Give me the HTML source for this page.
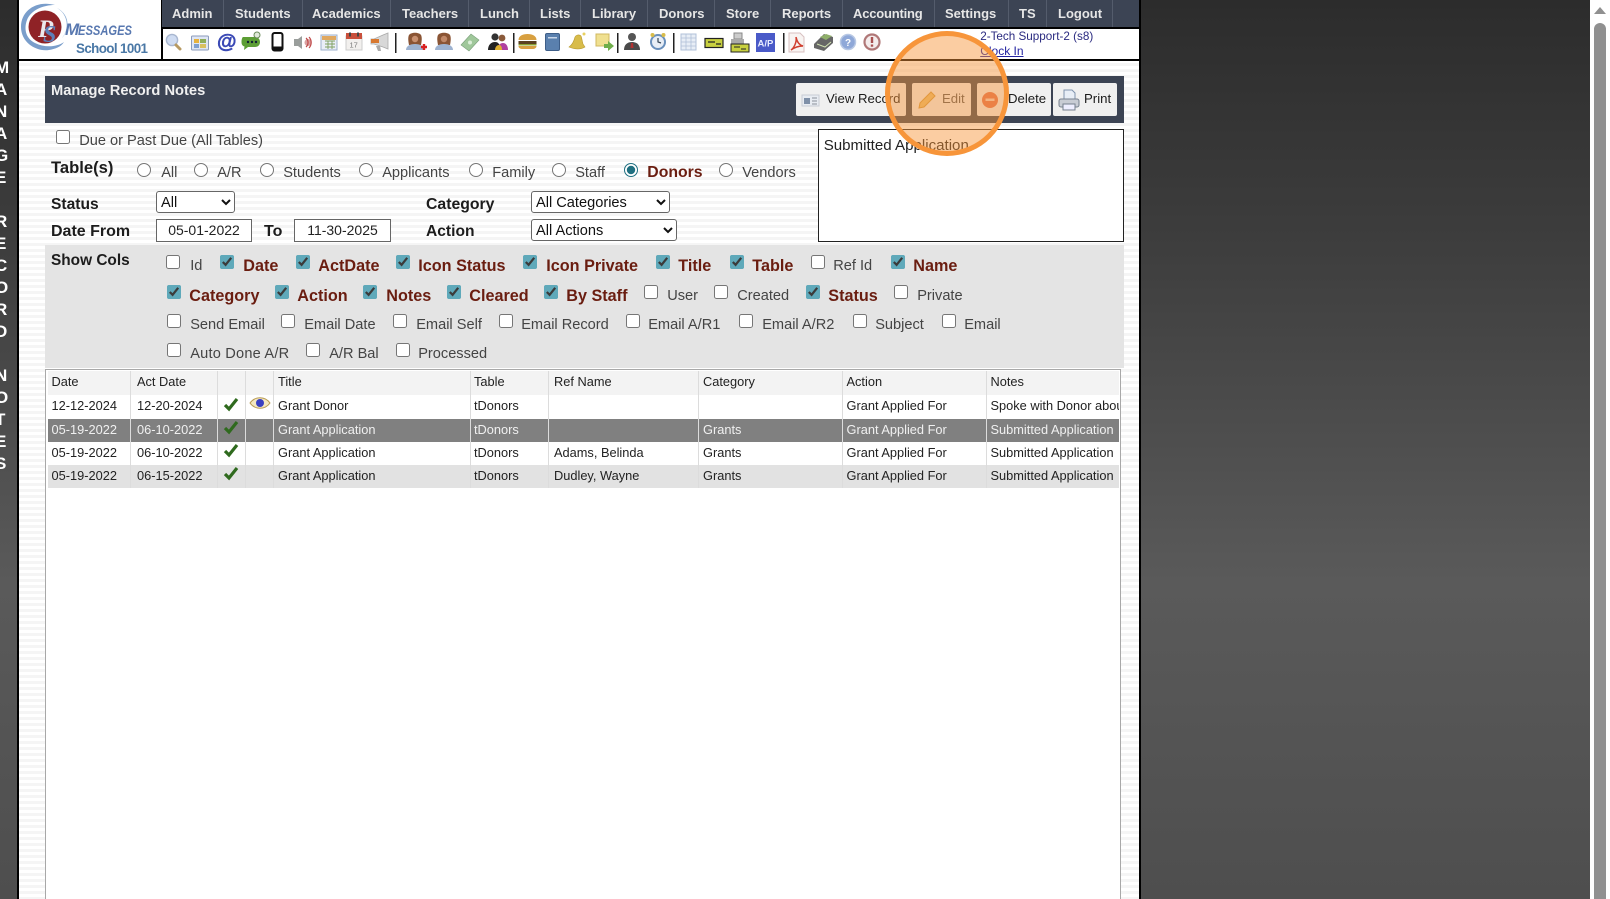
<!DOCTYPE html>
<html><head><meta charset="utf-8"><title>Manage Record Notes</title>
<style>
html,body{margin:0;padding:0;width:1610px;height:899px;overflow:hidden;background:#fff}
body{position:relative;font-family:"Liberation Sans",sans-serif;color:#333}
div,span,input,svg,select{position:absolute;box-sizing:border-box}
.bgd{left:0;top:0;width:1590px;height:899px;background:linear-gradient(#2c2c2c 0,#3c3c3c 25%,#5a5a5a 65%,#4e4e4e 100%)}
.side{left:-5px;top:57px;width:22px;height:842px;overflow:hidden;font:bold 17px/22px "Liberation Sans",sans-serif;color:#fff;text-align:left;white-space:pre}
.sidewrap{left:0;top:0;width:17px;height:899px;overflow:hidden}
.page{left:17px;top:0;width:1124px;height:899px;border-left:2px solid #000;border-right:2px solid #000;background:repeating-linear-gradient(#fff 0,#fff 3px,#f5f5f5 3px,#f5f5f5 6px)}
.nav{left:162px;top:0;width:977px;height:27px;background:#3c4454}
.nav span{top:0;height:27px;font:bold 13px/27px "Liberation Sans",sans-serif;color:#e6e6e6;white-space:nowrap}
.nav i{position:absolute;top:0;width:1px;height:27px;background:#545c6c}
.t{position:absolute;white-space:nowrap;font-size:14.6px;line-height:20px;color:#444;margin-left:.2px}
.b{position:absolute;white-space:nowrap;font-weight:bold;font-size:15.6px;line-height:20px;color:#1c1c1c}
.r{position:absolute;white-space:nowrap;font-weight:bold;font-size:16.2px;line-height:20px;color:#6a1d10;margin-left:.3px}
.row{left:0;width:1200px;height:20px}
input[type=checkbox],input[type=radio]{margin:0;width:14px;height:14px;accent-color:#5fa9ba}
.row input{top:-1px}
.sel{height:22px;font:14.6px "Liberation Sans",sans-serif;background:#fff;color:#111;border:1px solid #666;border-radius:3px;padding:1px 0 0}
.dt{height:23px;border:1px solid #666;background:#fff;font-size:14px;line-height:21px;text-align:center;color:#222}
.btn{top:83px;height:33px;background:#f0f0f0;border-radius:2px;font-size:13.2px;line-height:32px;color:#1b1b1b}
.btn span{white-space:nowrap}
.tb{left:45px;top:369px;width:1076px;height:530px;background:#fff;border:1px solid #a8a8a8;border-bottom:0;overflow:hidden}
.tr{left:2px;width:1071px;font-size:12.8px;color:#222;overflow:hidden}
.tr span{top:0;white-space:nowrap;line-height:inherit}
.tr i{position:absolute;top:0;bottom:0;width:1px;background:#dcdcdc}
</style></head><body>
<div class="bgd"></div>
<div class="sidewrap"><div class="side">M
A
N
A
G
E

R
E
C
O
R
D

N
O
T
E
S</div></div>
<div class="page"></div>

<div style="left:19px;top:0;width:143px;height:59px;background:#fff"></div>
<div style="left:161px;top:0;width:2px;height:60px;background:#000"></div>
<div style="left:163px;top:27px;width:976px;height:33px;background:#fff"></div>
<div style="left:19px;top:59px;width:1120px;height:2px;background:#000"></div>
<div style="left:162px;top:27px;width:977px;height:1.5px;background:#000"></div>

<svg style="left:19px;top:0" width="143" height="59" viewBox="0 0 143 59">
<path d="M36 5C18 0 2 10 2 27 2 43 18 52 30 50 36 49 42 47 45 42 38 47 26 48 16 43 6 38 5 28 8 20 12 10 24 5 36 5z" fill="#7a9ecb"/>
<path d="M38 8C46 12 50 20 48 28 47 33 45 36 43 38 50 30 50 15 38 8z" fill="#8fafd4"/>
<circle cx="26" cy="27" r="16.500" fill="#8f2226"/>
<text x="19" y="37" font-family="Liberation Serif,serif" font-style="italic" font-weight="bold" font-size="25" fill="#ece8ec">P</text>
<text x="24" y="42" font-family="Liberation Serif,serif" font-style="italic" font-weight="bold" font-size="24" fill="#5d7fb8">S</text>
<text x="46" y="35" font-family="Liberation Sans,sans-serif" font-style="italic" font-weight="bold" font-size="17" fill="#5878b0">M</text>
<text x="59" y="35" font-family="Liberation Sans,sans-serif" font-style="italic" font-weight="bold" font-size="13.500" fill="#5878b0" textLength="54" lengthAdjust="spacingAndGlyphs">ESSAGES</text>
<text x="57" y="53" font-family="Liberation Sans,sans-serif" font-weight="bold" font-size="13.4" fill="#4a78a6" textLength="72">School 1001</text>
</svg>

<div class="nav">
<span style="left:10px">Admin</span><i style="left:61px"></i>
<span style="left:73px">Students</span><i style="left:140px"></i>
<span style="left:150px">Academics</span><i style="left:228px"></i>
<span style="left:240px">Teachers</span><i style="left:306px"></i>
<span style="left:318px">Lunch</span><i style="left:367px"></i>
<span style="left:378px">Lists</span><i style="left:418px"></i>
<span style="left:430px">Library</span><i style="left:485px"></i>
<span style="left:497px">Donors</span><i style="left:552px"></i>
<span style="left:564px">Store</span><i style="left:608px"></i>
<span style="left:620px">Reports</span><i style="left:680px"></i>
<span style="left:691px;letter-spacing:-.2px">Accounting</span><i style="left:772px"></i>
<span style="left:783px">Settings</span><i style="left:846px"></i>
<span style="left:857px">TS</span><i style="left:884px"></i>
<span style="left:896px">Logout</span><i style="left:950px"></i>
</div>

<svg style="left:0;top:0" width="900" height="62" viewBox="0 0 900 62">
<circle cx="172" cy="40" r="5.600" fill="#cfdcf2" stroke="#a9b7d0" stroke-width="1.400"/><path d="M176 45l4 4" stroke="#b89a62" stroke-width="3" stroke-linecap="round"/>
<rect x="191.500" y="36" width="17" height="14" rx="1" fill="#dfe6f4" stroke="#8b9bbb"/><rect x="194" y="39" width="5" height="4" fill="#e6b13c"/><rect x="200" y="39" width="6" height="4" fill="#8fae5a"/><rect x="194" y="44" width="5" height="4" fill="#7f9fcf"/><rect x="200" y="44" width="6" height="4" fill="#d8c060"/>
<text x="217" y="48" font-family="Liberation Sans,sans-serif" font-weight="bold" font-size="20" fill="#3a49b5" stroke="#3a49b5" stroke-width=".5">@</text>
<path d="M243 37h12c3 0 5 2 5 5s-2 5-5 5h-7l-4 3 .5-3.500c-2-.5-3-2-3-4.500 0-3 1-5 1.500-5z" fill="#5c9e34"/><circle cx="248" cy="42" r="1.200" fill="#123"/><circle cx="252" cy="42" r="1.200" fill="#123"/><circle cx="256" cy="42" r="1.200" fill="#123"/><circle cx="257" cy="35" r="3" fill="#dfe8d8" stroke="#6a8a5a"/>
<rect x="272.500" y="33" width="10" height="17.500" rx="2" fill="#fff" stroke="#111" stroke-width="2"/><rect x="272" y="46.500" width="11" height="4" rx="1.500" fill="#111"/>
<path d="M294 39h4l4-3v13l-4-3h-4z" fill="#9a9e9c"/><circle cx="308" cy="42.500" r="3.500" fill="#d9a0a0"/><path d="M306 38a6 6 0 0 1 0 9M309 37a8 8 0 0 1 0 11" stroke="#c04a4a" stroke-width="1.200" fill="none"/>
<rect x="321" y="35" width="16" height="15" fill="#e9eef8" stroke="#9db0cc"/><rect x="322" y="36" width="14" height="4" fill="#e0a860"/><path d="M325 41h10M325 44h10M325 47h10M328 41v8M332 41v8" stroke="#7fa060" stroke-width=".9"/>
<rect x="346" y="36" width="16" height="14" fill="#f2f0ee" stroke="#ccc"/><rect x="346" y="33" width="16" height="6" fill="#c9503c"/><rect x="349" y="32.500" width="2" height="4" fill="#444"/><rect x="357" y="32.500" width="2" height="4" fill="#444"/><text x="349.500" y="47.500" font-family="Liberation Sans,sans-serif" font-size="7.500" fill="#777">17</text>
<path d="M371 39l3 0 9-4 5-2v16l-5-2-9-3h-3z" fill="#d8d8d8" stroke="#aaa" stroke-width=".8"/><path d="M371 39h8v4h-8z" fill="#d87830"/><path d="M376 46l2 5h3l-1-5z" fill="#aaa"/>
<rect x="395" y="33" width="1.500" height="20" fill="#222"/>
<path d="M409 45c-1-5-1-8 0-10 2-3 10-3 12 0 1 2 1 5 0 10z" fill="#8a5434"/><path d="M406 50c0-4 4-6 9-6s9 2 9 6z" fill="#9db2d0"/><circle cx="415" cy="39" r="3.200" fill="#c89070"/><path d="M421 47h6M424 44v6" stroke="#d82020" stroke-width="2.400"/>
<path d="M438 45c-1-5-1-8 0-10 2-3 10-3 12 0 1 2 1 5 0 10z" fill="#8a5434"/><path d="M435 50c0-4 4-6 9-6s9 2 9 6z" fill="#9db2d0"/><circle cx="444" cy="39" r="3.200" fill="#c08868"/>
<path d="M461 45l10-11 8 6-10 11z" fill="#9fc79a" stroke="#7aa07a" stroke-width=".6"/><circle cx="470" cy="42.500" r="2" fill="#dbeed8"/>
<circle cx="495" cy="37" r="3.600" fill="#333"/><circle cx="502" cy="38" r="3.400" fill="#8a5a3a"/><path d="M488 50c0-5 3-8 7-8s5 3 5 8z" fill="#222"/><path d="M497 50c0-4 3-7 6-7s5 3 5 7z" fill="#b040a0"/><path d="M495 50c0-3 2-5 4-5s3 2 3 5z" fill="#e0b030"/>
<rect x="513" y="33" width="1.500" height="20" fill="#222"/>
<path d="M518.500 40c0-4 4-6 9-6s9 2 9 6z" fill="#d8a040"/><rect x="518.500" y="41" width="18" height="3" fill="#5a4020"/><rect x="518.500" y="44" width="18" height="1.500" fill="#8aa030"/><path d="M518.500 46h18c0 2-2 3-4 3h-10c-2 0-4-1-4-3z" fill="#d8a040"/>
<rect x="545.500" y="33.500" width="14" height="17" rx="1.500" fill="#5a80ae" stroke="#3e5e88"/><rect x="548" y="37" width="9" height="1.500" fill="#c8d6e8"/>
<path d="M569 47c3-2 5-6 6-10 1-2 4-3 6-1 1 2 1 5 2 8l2 3c-5 3-11 2-16 0z" fill="#d8bc4a" stroke="#b89a30" stroke-width=".6"/><circle cx="584" cy="34" r="1.500" fill="#e8d060"/>
<rect x="596" y="34" width="13" height="12" fill="#f0e090" stroke="#d0b860"/><path d="M604 44h4v-3l6 5-6 5v-3h-4z" fill="#6fae4a"/>
<rect x="617" y="33" width="1.500" height="20" fill="#222"/>
<circle cx="632" cy="37" r="4" fill="#555"/><path d="M624 50c0-5 3-8 8-8s8 3 8 8z" fill="#4a4a4a"/><path d="M631 43h2l.5 5h-3z" fill="#b03030"/>
<circle cx="658" cy="42" r="7" fill="#e8eef6" stroke="#6a90bc" stroke-width="2"/><circle cx="652.500" cy="35" r="2" fill="#d8bc4a"/><circle cx="663.500" cy="35" r="2" fill="#d8bc4a"/><path d="M658 38v4l3 1" stroke="#345" stroke-width="1.200" fill="none"/>
<rect x="673" y="33" width="1.500" height="20" fill="#222"/>
<rect x="681" y="34" width="15" height="16" fill="#e8eef6" stroke="#b0c0d8"/><path d="M681 38h15M681 42h15M681 46h15M686 34v16M691 34v16" stroke="#b0c0d8" stroke-width=".8"/>
<rect x="705" y="38.500" width="18" height="9" fill="#c8d040" stroke="#222" stroke-width="1.200"/><path d="M708 42h7M716 44h5" stroke="#222" stroke-width="1.200"/>
<rect x="734" y="33" width="8" height="6" fill="#ccc" stroke="#888"/><path d="M731 39h13v6h-13z" fill="#aaa"/><rect x="731" y="44" width="18" height="8" fill="#c8d040" stroke="#222"/><path d="M734 47h6M741 49h5" stroke="#222"/>
<rect x="756" y="33" width="19" height="19" fill="#4a5ac8"/><text x="757.500" y="46.500" font-family="Liberation Sans,sans-serif" font-weight="bold" font-size="9.500" fill="#e8ecff">A/P</text>
<rect x="783" y="33" width="1.500" height="20" fill="#222"/>
<path d="M789 33h11l4 4v15h-15z" fill="#f8f4f2" stroke="#d8c0c0"/><path d="M791 50c3-2 6-8 5-13 1 5 3 8 7 9-4 0-8 1-12 4z" fill="none" stroke="#d04030" stroke-width="1.500"/>
<path d="M814 44l10-10 9 3v6l-9 8-10-3z" fill="#666"/><path d="M820 37l6-3 6 2-6 4z" fill="#8faf6a"/><path d="M817 44l8 3 6-5" stroke="#cfe0b0" fill="none"/>
<circle cx="848" cy="42" r="7.500" fill="#8fa8d8" stroke="#b8c8e4" stroke-width="1.500"/><text x="845" y="46" font-family="Liberation Sans,sans-serif" font-weight="bold" font-size="10" fill="#fff">?</text>
<circle cx="872" cy="42" r="7.500" fill="#f4ecec" stroke="#b07878" stroke-width="2.200"/><rect x="870.800" y="37" width="2.400" height="6" fill="#a85050"/><rect x="870.800" y="44.500" width="2.400" height="2.200" fill="#a85050"/>
</svg>

<span class="t" style="left:980px;top:27px;font-size:11.7px;color:#2a2a80">2-Tech Support-2 (s8)</span>
<span class="t" style="left:980px;top:41px;font-size:12px;color:#2222a0;text-decoration:underline">Clock In</span>

<div style="left:45px;top:76px;width:1079px;height:47px;background:#3c4454"></div>
<span class="b" style="left:51px;top:81px;color:#f0f0f0;font-size:14.7px">Manage Record Notes</span>

<div class="btn" style="left:796px;width:110px"><span style="left:30px;top:0">View Record</span>
<svg style="left:5px;top:9px" width="20" height="16" viewBox="0 0 20 16"><rect x="1" y="3" width="17" height="11" fill="#e8ecf2" stroke="#c8ccd4"/><rect x="3" y="6" width="6" height="6" fill="#7f90a8"/><path d="M11 6h5M11 9h5M11 12h5" stroke="#8a8f9a"/></svg></div>
<div class="btn" style="left:912px;width:59px"><span style="left:30px;top:0;color:#555">Edit</span>
<svg style="left:4px;top:6px" width="22" height="22" viewBox="0 0 22 22"><path d="M3 19l1-5L15 3l4 4L8 18z" fill="#e8c070" stroke="#d09a40"/></svg></div>
<div class="btn" style="left:977px;width:74px"><span style="left:31px;top:0">Delete</span>
<svg style="left:3px;top:7px" width="20" height="20" viewBox="0 0 20 20"><circle cx="10" cy="10" r="8" fill="#e07050"/><rect x="5.500" y="8.500" width="9" height="2.500" fill="#f0d0c0"/></svg></div>
<div class="btn" style="left:1053px;width:64px"><span style="left:31px;top:0">Print</span>
<svg style="left:4px;top:5px" width="24" height="24" viewBox="0 0 24 24"><path d="M7 2h8l3 3v7H7z" fill="#e8eef6" stroke="#7f93ad"/><rect x="2" y="11" width="20" height="8" rx="2" fill="#c8ccd4" stroke="#76808e"/><rect x="6" y="16" width="12" height="6" fill="#eef" stroke="#76808e"/></svg></div>

<div style="left:818px;top:129px;width:306px;height:113px;background:#fff;border:1px solid #222"></div>
<span class="t" style="left:823.500px;top:135.500px;color:#222;font-size:15.100px">Submitted Application</span>

<input type="checkbox" style="left:56px;top:130px">
<span class="t" style="left:79px;top:130.500px">Due or Past Due (All Tables)</span>

<span class="b" style="left:51px;top:157.500px;font-size:16.600px">Table(s)</span>
<input type="radio" style="left:137px;top:163px"><span class="t" style="left:161px;top:163px">All</span>
<input type="radio" style="left:194px;top:163px"><span class="t" style="left:217px;top:163px">A/R</span>
<input type="radio" style="left:260px;top:163px"><span class="t" style="left:283px;top:163px">Students</span>
<input type="radio" style="left:359px;top:163px"><span class="t" style="left:382px;top:163px">Applicants</span>
<input type="radio" style="left:468.500px;top:163px"><span class="t" style="left:492px;top:163px">Family</span>
<input type="radio" style="left:551.500px;top:163px"><span class="t" style="left:575px;top:163px">Staff</span>
<input type="radio" checked style="left:624px;top:163px;accent-color:#1f6f80"><span class="r" style="left:647px;top:163px;font-size:15.800px">Donors</span>
<input type="radio" style="left:719px;top:163px"><span class="t" style="left:742px;top:163px">Vendors</span>

<span class="b" style="left:51px;top:194.500px">Status</span>
<select class="sel" style="left:156px;top:191px;width:79px"><option>All</option></select>
<span class="b" style="left:426px;top:194.500px;font-size:15.800px">Category</span>
<select class="sel" style="left:531px;top:191px;width:139px"><option>All Categories</option></select>
<span class="b" style="left:51px;top:221.500px;font-size:16px">Date From</span>
<div class="dt" style="left:156px;top:219px;width:96px">05-01-2022</div>
<span class="b" style="left:264px;top:221.500px;font-size:16px">To</span>
<div class="dt" style="left:294px;top:219px;width:97px">11-30-2025</div>
<span class="b" style="left:426px;top:221.500px">Action</span>
<select class="sel" style="left:531px;top:219px;width:146px"><option>All Actions</option></select>

<div style="left:45px;top:245px;width:1079px;height:123px;background:#e4e4e4"></div>
<span class="b" style="left:51px;top:251px;font-size:15.400px">Show Cols</span>

<div class="row" style="top:256px">
<input type="checkbox" style="left:166px"><span class="t" style="left:190px">Id</span>
<input type="checkbox" checked style="left:220px"><span class="r" style="left:243px">Date</span>
<input type="checkbox" checked style="left:296px"><span class="r" style="left:318px">ActDate</span>
<input type="checkbox" checked style="left:396px"><span class="r" style="left:418px">Icon Status</span>
<input type="checkbox" checked style="left:523px"><span class="r" style="left:546px">Icon Private</span>
<input type="checkbox" checked style="left:655.500px"><span class="r" style="left:678px">Title</span>
<input type="checkbox" checked style="left:729.500px"><span class="r" style="left:752px">Table</span>
<input type="checkbox" style="left:811px"><span class="t" style="left:833px">Ref Id</span>
<input type="checkbox" checked style="left:891px"><span class="r" style="left:913px">Name</span>
</div>
<div class="row" style="top:285.500px">
<input type="checkbox" checked style="left:167px"><span class="r" style="left:189px">Category</span>
<input type="checkbox" checked style="left:275px"><span class="r" style="left:297px">Action</span>
<input type="checkbox" checked style="left:363px"><span class="r" style="left:386px">Notes</span>
<input type="checkbox" checked style="left:447px"><span class="r" style="left:469px">Cleared</span>
<input type="checkbox" checked style="left:544px"><span class="r" style="left:566px">By Staff</span>
<input type="checkbox" style="left:644px"><span class="t" style="left:667px">User</span>
<input type="checkbox" style="left:714px"><span class="t" style="left:737px">Created</span>
<input type="checkbox" checked style="left:806px"><span class="r" style="left:828px">Status</span>
<input type="checkbox" style="left:894px"><span class="t" style="left:917px">Private</span>
</div>
<div class="row" style="top:315px">
<input type="checkbox" style="left:167px"><span class="t" style="left:190px">Send Email</span>
<input type="checkbox" style="left:281px"><span class="t" style="left:304px">Email Date</span>
<input type="checkbox" style="left:393px"><span class="t" style="left:416px">Email Self</span>
<input type="checkbox" style="left:499px"><span class="t" style="left:521px">Email Record</span>
<input type="checkbox" style="left:626px"><span class="t" style="left:648px">Email A/R1</span>
<input type="checkbox" style="left:739px"><span class="t" style="left:762px">Email A/R2</span>
<input type="checkbox" style="left:853px"><span class="t" style="left:875px">Subject</span>
<input type="checkbox" style="left:942px"><span class="t" style="left:964px">Email</span>
</div>
<div class="row" style="top:343.500px">
<input type="checkbox" style="left:167px"><span class="t" style="left:190px;letter-spacing:.2px">Auto Done A/R</span>
<input type="checkbox" style="left:306px"><span class="t" style="left:329px">A/R Bal</span>
<input type="checkbox" style="left:396px"><span class="t" style="left:418px">Processed</span>
</div>

<div class="tb">
<div class="tr" style="top:1px;height:24px;line-height:21px;background:#f3f3f3">
<span style="left:3.500px">Date</span><i style="left:82px"></i><span style="left:89px">Act Date</span><i style="left:169px"></i><i style="left:197px"></i><i style="left:225px"></i><span style="left:230px">Title</span><i style="left:422px"></i><span style="left:426px">Table</span><i style="left:500px"></i><span style="left:506px">Ref Name</span><i style="left:650px"></i><span style="left:655px">Category</span><i style="left:794px"></i><span style="left:798.500px">Action</span><i style="left:938px"></i><span style="left:942.500px">Notes</span>
</div>
<div class="tr" style="top:25px;height:24px;line-height:22.500px">
<span style="left:3.500px">12-12-2024</span><i style="left:82px"></i><span style="left:89px">12-20-2024</span><i style="left:169px"></i><i style="left:197px"></i><i style="left:225px"></i><span style="left:230px">Grant Donor</span><i style="left:422px"></i><span style="left:426px">tDonors</span><i style="left:500px"></i><i style="left:650px"></i><i style="left:794px"></i><span style="left:798.500px">Grant Applied For</span><i style="left:938px"></i><span style="left:942.500px">Spoke with Donor about</span>
</div>
<div class="tr" style="top:49px;height:23px;line-height:21px;background:#808080;color:#f0f0f0">
<span style="left:3.500px">05-19-2022</span><i style="left:82px"></i><span style="left:89px">06-10-2022</span><i style="left:169px"></i><i style="left:197px"></i><i style="left:225px"></i><span style="left:230px">Grant Application</span><i style="left:422px"></i><span style="left:426px">tDonors</span><i style="left:500px"></i><i style="left:650px"></i><span style="left:655px">Grants</span><i style="left:794px"></i><span style="left:798.500px">Grant Applied For</span><i style="left:938px"></i><span style="left:942.500px">Submitted Application</span>
</div>
<div class="tr" style="top:72px;height:23px;line-height:21px">
<span style="left:3.500px">05-19-2022</span><i style="left:82px"></i><span style="left:89px">06-10-2022</span><i style="left:169px"></i><i style="left:197px"></i><i style="left:225px"></i><span style="left:230px">Grant Application</span><i style="left:422px"></i><span style="left:426px">tDonors</span><i style="left:500px"></i><span style="left:506px">Adams, Belinda</span><i style="left:650px"></i><span style="left:655px">Grants</span><i style="left:794px"></i><span style="left:798.500px">Grant Applied For</span><i style="left:938px"></i><span style="left:942.500px">Submitted Application</span>
</div>
<div class="tr" style="top:95px;height:23px;line-height:21px;background:#e2e2e2">
<span style="left:3.500px">05-19-2022</span><i style="left:82px"></i><span style="left:89px">06-15-2022</span><i style="left:169px"></i><i style="left:197px"></i><i style="left:225px"></i><span style="left:230px">Grant Application</span><i style="left:422px"></i><span style="left:426px">tDonors</span><i style="left:500px"></i><span style="left:506px">Dudley, Wayne</span><i style="left:650px"></i><span style="left:655px">Grants</span><i style="left:794px"></i><span style="left:798.500px">Grant Applied For</span><i style="left:938px"></i><span style="left:942.500px">Submitted Application</span>
</div>
</div>
<svg style="left:45px;top:369px" width="240" height="125" viewBox="0 0 240 125">
<path d="M180 36l4 4 8-10M180 59l4 4 8-10M180 82l4 4 8-10M180 105l4 4 8-10" stroke="#2f6a1e" stroke-width="3.200" fill="none"/>
<path d="M205 34c5-7 15-7 20 0-5 7-15 7-20 0z" fill="#f2e6c0" stroke="#b89a50"/><circle cx="215" cy="34" r="4" fill="#3a40c0"/>
</svg>

<div style="left:1590px;top:0;width:20px;height:899px;background:#fff"></div>
<div style="left:1594px;top:23px;width:12px;height:876px;background:#909090;border-radius:6px 6px 0 0"></div>
<svg style="left:1594px;top:6px" width="12" height="8" viewBox="0 0 12 8"><path d="M0 8L6 1 12 8z" fill="#909090"/></svg>

<div style="left:885px;top:31px;width:124px;height:125px;border-radius:50%;border:5px solid #f7953a;background:rgba(247,149,58,.47)"></div>
</body></html>
